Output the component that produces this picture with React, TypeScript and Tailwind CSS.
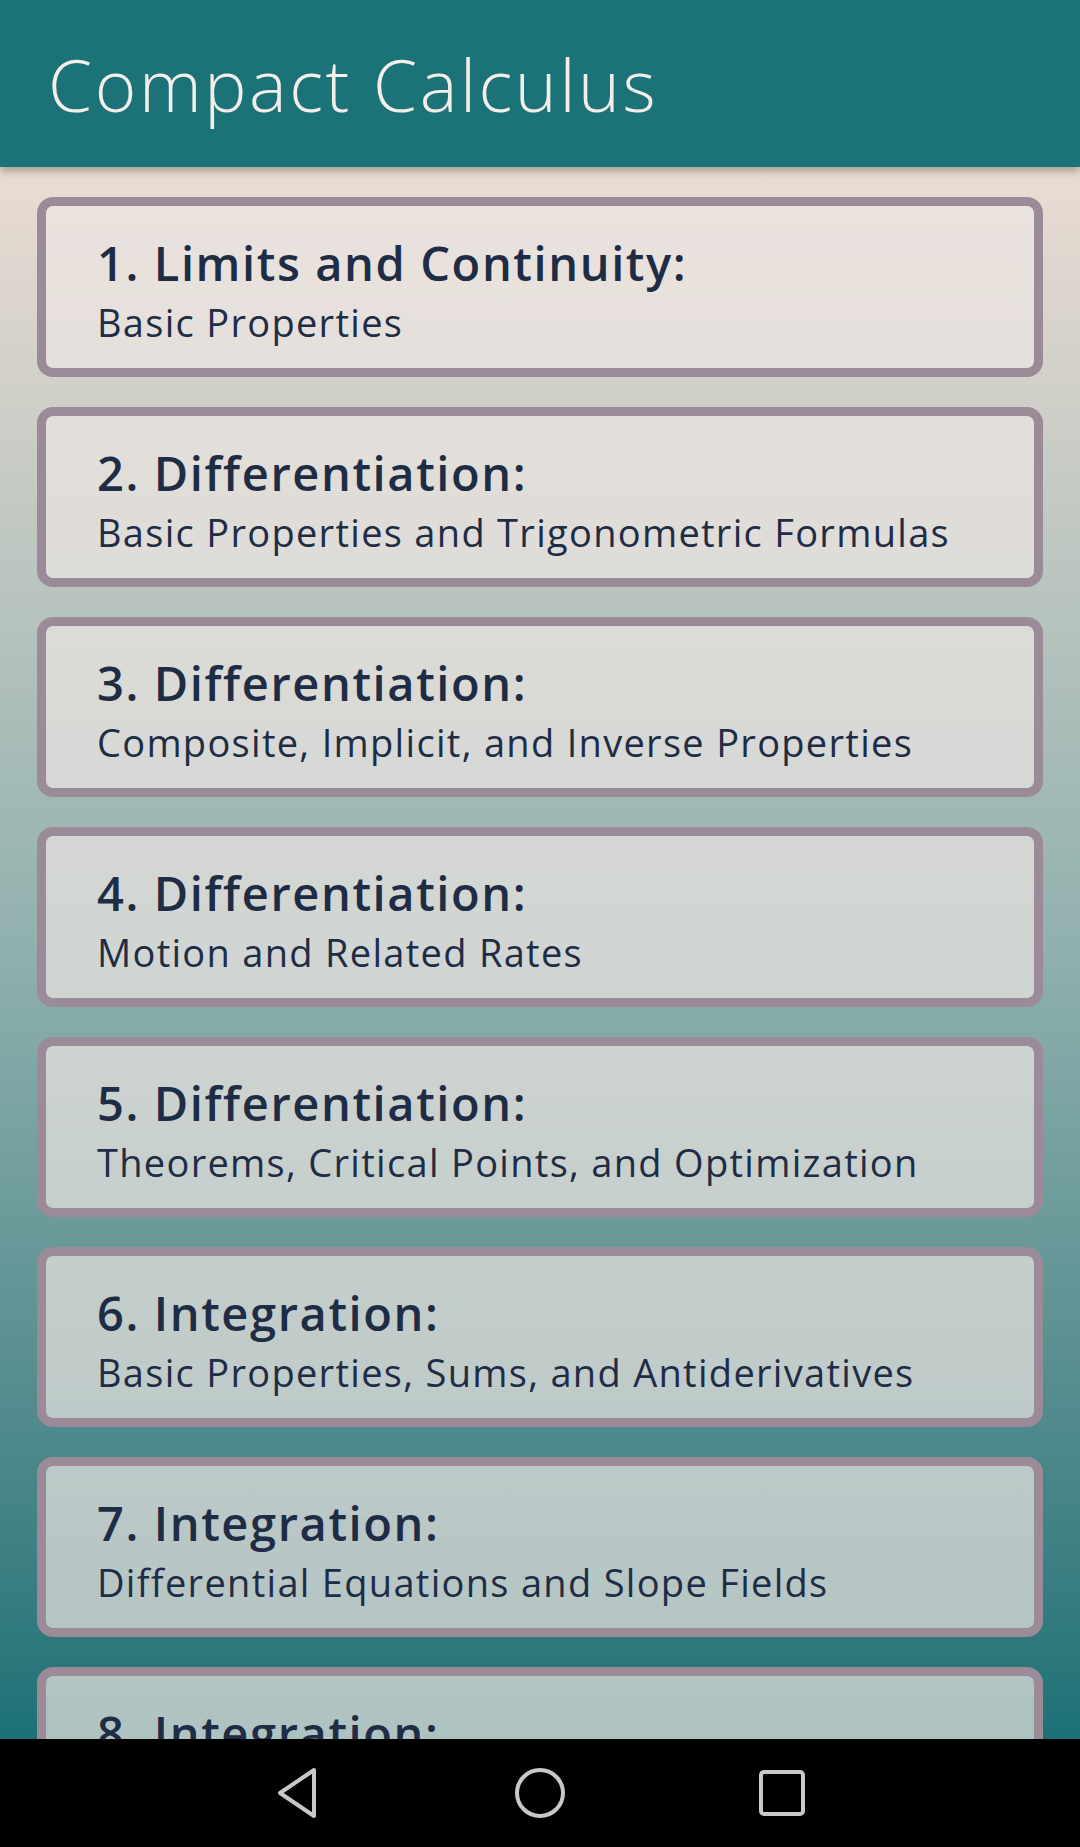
import React from 'react';

const topics = [
  { title: '1. Limits and Continuity:', sub: 'Basic Properties' },
  { title: '2. Differentiation:', sub: 'Basic Properties and Trigonometric Formulas' },
  { title: '3. Differentiation:', sub: 'Composite, Implicit, and Inverse Properties' },
  { title: '4. Differentiation:', sub: 'Motion and Related Rates' },
  { title: '5. Differentiation:', sub: 'Theorems, Critical Points, and Optimization' },
  { title: '6. Integration:', sub: 'Basic Properties, Sums, and Antiderivatives' },
  { title: '7. Integration:', sub: 'Differential Equations and Slope Fields' },
  { title: '8. Integration:', sub: 'Definite Integrals and Applications' },
];

function TopicCard({ title, sub }: { title: string; sub: string }) {
  return (
    <div className="h-[180px] shrink-0 rounded-[16px] border-[9px] border-[#9b8a98] bg-[#ece6e2]/70 pl-[51px] flex flex-col justify-center text-[#1e2d45]">
      <div className="text-[47px] font-semibold leading-[52px] tracking-[1.6px] mt-[8px]">{title}</div>
      <div className="text-[38px] leading-[46px] tracking-[1.3px] mt-[10px]">{sub}</div>
    </div>
  );
}

function NavBar() {
  return (
    <div className="h-[108px] shrink-0 bg-black flex items-center justify-center gap-[192px]">
      <svg width="48" height="52" viewBox="0 0 48 52" fill="none" stroke="#c8c8c8" strokeWidth="4" strokeLinejoin="round">
        <path d="M40 3 L6 26 L40 49 Z" />
      </svg>
      <svg width="52" height="52" viewBox="0 0 52 52" fill="none" stroke="#c8c8c8" strokeWidth="4">
        <circle cx="26" cy="26" r="23" />
      </svg>
      <svg width="48" height="48" viewBox="0 0 48 48" fill="none" stroke="#c8c8c8" strokeWidth="4">
        <rect x="3" y="3" width="42" height="42" rx="3" />
      </svg>
    </div>
  );
}

export default function App() {
  return (
    <div className="h-[1847px] w-[1080px] flex flex-col overflow-hidden" style={{ fontFamily: '"Open Sans", "Noto Sans", sans-serif' }}>
      <div className="relative z-10 h-[167px] shrink-0 bg-[#1b7378] shadow-[0_4px_8px_rgba(0,0,0,0.3)] flex items-center pl-[48px]">
        <h1 className="text-[71px] font-light text-[#f3eee9] tracking-[2.6px] pt-[4px]">Compact Calculus</h1>
      </div>
      <div className="flex-1 overflow-hidden bg-gradient-to-b from-[#eadcd3] via-[#8fb0ae] to-[#1b7176] px-[37px] pt-[30px] flex flex-col gap-[30px]">
        {topics.map((t) => (
          <TopicCard key={t.title} title={t.title} sub={t.sub} />
        ))}
      </div>
      <NavBar />
    </div>
  );
}
